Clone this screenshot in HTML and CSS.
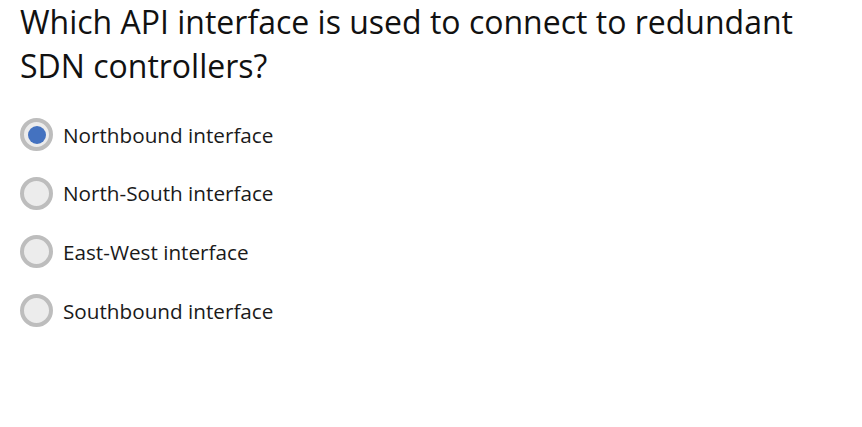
FILE: index.html
```html
<!DOCTYPE html>
<html>
<head>
<meta charset="utf-8">
<link rel="stylesheet" href="styles.css">
</head>
<body>
<div class="quiz">
  <h1 class="question">Which API interface is used to connect to redundant SDN controllers?</h1>
  <ul class="options">
    <li class="option"><span class="radio checked"></span><span class="label">Northbound interface</span></li>
    <li class="option"><span class="radio"></span><span class="label">North-South interface</span></li>
    <li class="option"><span class="radio"></span><span class="label">East-West interface</span></li>
    <li class="option"><span class="radio"></span><span class="label">Southbound interface</span></li>
  </ul>
</div>
</body>
</html>
```
FILE: styles.css
```css
html, body {
  margin: 0;
  padding: 0;
  background: #ffffff;
}
body {
  font-family: "Open Sans", "Liberation Sans", sans-serif;
  color: #1a1a1a;
}
.quiz {
  padding: 0 20px;
}
.question {
  margin: 0;
  font-size: 32px;
  font-weight: 400;
  line-height: 44px;
  color: #111;
}
.options {
  list-style: none;
  margin: 30px 0 0 0;
  padding: 0;
  display: flex;
  flex-direction: column;
  gap: 25.7px;
}
.option {
  display: flex;
  align-items: center;
  gap: 10px;
  height: 33px;
}
.radio {
  box-sizing: border-box;
  width: 33px;
  height: 33px;
  border-radius: 50%;
  border: 4px solid #bdbdbd;
  background: #ececec;
  display: flex;
  align-items: center;
  justify-content: center;
  flex: none;
}
.radio.checked::after {
  content: "";
  width: 18px;
  height: 18px;
  border-radius: 50%;
  background: #4472c0;
}
.label {
  font-size: 20.7px;
  color: #1a1a1a;
}
```
